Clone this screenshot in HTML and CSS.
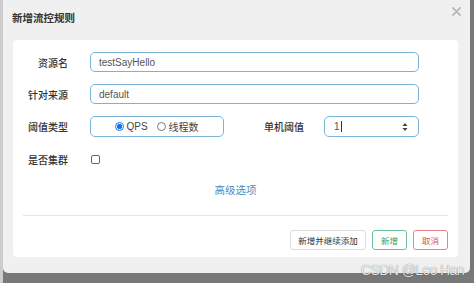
FILE: index.html
```html
<!DOCTYPE html>
<html lang="zh-CN">
<head>
  <meta charset="UTF-8">
  <meta name="viewport" content="width=device-width, initial-scale=1.0">
  <title>新增流控规则</title>
  <link rel="stylesheet" href="styles.css">
</head>
<body>
  <div class="page">
    <div class="modal">
      <div class="modalHeader">
        <span class="modalTitle">新增流控规则</span>
        <svg class="close" viewBox="0 0 10 10" width="9" height="9">
          <path d="M1 1 L9 9 M9 1 L1 9" stroke="#b4b4b4" stroke-width="1.8" stroke-linecap="round"/>
        </svg>
      </div>
      <div class="card">
        <div class="form">
          <div class="row">
            <label class="label">资源名</label>
            <input class="input" value="testSayHello">
          </div>
          <div class="row">
            <label class="label">针对来源</label>
            <input class="input" value="default">
          </div>
          <div class="row rowTall">
            <label class="label">阈值类型</label>
            <div class="radioGroup">
              <span class="radio checked"></span><span class="radioText">QPS</span>
              <span class="radio second"></span><span class="radioText cjk">线程数</span>
            </div>
            <label class="label labelRight">单机阈值</label>
            <div class="number">
              <span class="numberValue">1</span><span class="caret"></span>
              <svg class="spinner" viewBox="0 0 6 10" width="6" height="10">
                <path d="M0.5 4 L3 1 L5.5 4 Z M0.5 6 L3 9 L5.5 6 Z" fill="#444"/>
              </svg>
            </div>
          </div>
          <div class="row rowLast">
            <label class="label">是否集群</label>
            <span class="checkbox"></span>
          </div>
        </div>
        <div class="advanced"><a class="link">高级选项</a></div>
        <div class="footer">
          <button class="btn btnDefault">新增并继续添加</button>
          <button class="btn btnSuccess">新增</button>
          <button class="btn btnDanger">取消</button>
        </div>
      </div>
    </div>
  </div>
  <div class="watermark">CSDN @Leo Han</div>
</body>
</html>
```

FILE: styles.css
```css
body, html {
  margin: 0;
  height: 283px;
  overflow: hidden;
}
body {
  background: linear-gradient(to right, #cdcdcd 3px, #787878 3px);
  font-family: "Noto Sans CJK SC", "Liberation Sans", sans-serif;
  position: relative;
}
.page {
  padding: 0 4px 0 3px;
}
.modal {
  position: relative;
  width: 467px;
  height: 273px;
  background-color: #f0f0f0;
  border-radius: 0 0 5px 5px;
}
.modalHeader {
  height: 40px;
  box-sizing: border-box;
  padding: 11px 0 0 9px;
}
.modalTitle {
  display: block;
  font-size: 10.5px;
  line-height: 14px;
  font-weight: bold;
  color: #333;
}
.close {
  position: absolute;
  top: 7px;
  right: 9px;
}
.card {
  margin: 0 12px 0 10px;
  height: 217px;
  box-sizing: border-box;
  padding-top: 12px;
  background-color: #fff;
  border-radius: 4px;
}
.form {
  padding-right: 39px;
}
.row {
  display: flex;
  align-items: center;
  height: 20px;
  margin-bottom: 12px;
}
.rowTall {
  height: 21px;
}
.rowLast {
  margin-bottom: 0;
}
.label {
  width: 55px;
  margin-right: 22px;
  flex-shrink: 0;
  text-align: right;
  font-size: 10px;
  font-weight: 500;
  color: #333;
}
.labelRight {
  width: 80px;
  margin-right: 20px;
}
.input {
  flex: 1;
  min-width: 0;
  height: 20px;
  box-sizing: border-box;
  border: 1px solid #79b4d8;
  border-radius: 5px;
  padding: 0 8px;
  font-family: "Liberation Sans", Arial, sans-serif;
  font-size: 10px;
  color: #555;
  outline: none;
}
.radioGroup {
  width: 134px;
  height: 21px;
  box-sizing: border-box;
  border: 1px solid #79b4d8;
  border-radius: 5px;
  display: flex;
  align-items: center;
  justify-content: center;
  flex-shrink: 0;
}
.radio {
  width: 9px;
  height: 9px;
  box-sizing: border-box;
  border: 1px solid #777;
  border-radius: 50%;
  margin-right: 2px;
}
.radio.checked {
  border-color: #1a73e8;
  background: radial-gradient(circle, #1a73e8 2.4px, #fff 2.9px);
}
.radio.second {
  margin-left: 9px;
}
.radioText {
  font-family: "Liberation Sans", Arial, sans-serif;
  font-size: 10px;
  color: #444;
}
.radioText.cjk {
  font-family: "Noto Sans CJK SC", sans-serif;
  margin-left: 1px;
}
.number {
  width: 97px;
  height: 21px;
  box-sizing: border-box;
  border: 1px solid #79b4d8;
  border-radius: 5px;
  padding-left: 9px;
  display: flex;
  align-items: center;
}
.numberValue {
  font-family: "Liberation Sans", Arial, sans-serif;
  font-size: 10px;
  color: #555;
}
.caret {
  width: 1px;
  height: 11px;
  background-color: #333;
  margin-left: 1px;
}
.spinner {
  margin-left: auto;
  margin-right: 10px;
}
.checkbox {
  width: 9px;
  height: 9px;
  box-sizing: border-box;
  border: 1px solid #666;
  border-radius: 2px;
  margin-left: 1px;
}
.advanced {
  margin-top: 8px;
  text-align: center;
  line-height: 20px;
}
.link {
  font-size: 10.5px;
  color: #3d8fc6;
  cursor: pointer;
}
.footer {
  margin: 15px 10px 0;
  border-top: 1px solid #e5e5e5;
  padding-top: 14px;
  display: flex;
  justify-content: flex-end;
  gap: 6px;
}
.btn {
  height: 20px;
  padding: 0;
  background-color: #fff;
  border: 1px solid #ddd;
  border-radius: 3px;
  font-family: "Noto Sans CJK SC", sans-serif;
  font-size: 8.5px;
  color: #333;
  cursor: pointer;
}
.btnDefault {
  width: 76px;
}
.btnSuccess {
  width: 35px;
  border-color: #6cc196;
  color: #3a9e64;
}
.btnDanger {
  width: 35px;
  border-color: #e8838f;
  color: #d9534f;
}
.watermark {
  position: absolute;
  right: 10px;
  top: 262px;
  font-family: "Liberation Sans", Arial, sans-serif;
  font-size: 14px;
  letter-spacing: -0.6px;
  color: rgba(255, 255, 255, 0.88);
  text-shadow: 0 0 1px rgba(0, 0, 0, 0.6);
}
```
